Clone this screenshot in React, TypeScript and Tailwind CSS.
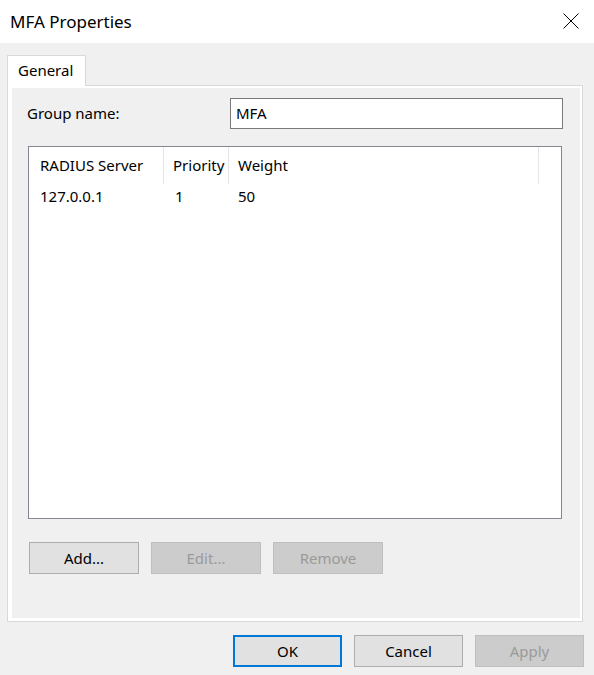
type Btn = { label: string; disabled?: boolean; primary?: boolean; wide?: boolean };

function DialogButton({ label, disabled, primary, wide }: Btn) {
  const base = `h-[32px] ${wide ? "w-[110px]" : "w-[109px]"} flex items-center justify-center text-[15px]`;
  if (disabled) {
    return (
      <div className={`${base} bg-[#cccccc] border border-[#bfbfbf] text-[#9a9a9a]`}>
        {label}
      </div>
    );
  }
  return (
    <div
      className={`${base} bg-[#e1e1e1] text-black ${
        primary ? "border-2 border-[#0078d7]" : "border border-[#adadad]"
      }`}
    >
      {label}
    </div>
  );
}

const servers = [{ host: "127.0.0.1", priority: "1", weight: "50" }];

export default function App() {
  return (
    <div
      className="w-[594px] h-[675px] bg-[#f0f0f0] flex flex-col text-black"
      style={{ fontFamily: '"Noto Sans", "Open Sans", sans-serif' }}
    >
      {/* title bar */}
      <div className="h-[43px] bg-white flex items-center justify-between pl-[10px] pr-[15px]">
        <span className="text-[17px]">MFA Properties</span>
        <svg width="16" height="16" viewBox="0 0 16 16" className="mt-[-1px]">
          <path d="M0.5 0.5 L15.5 15.5 M15.5 0.5 L0.5 15.5" stroke="#000" strokeWidth="1" />
        </svg>
      </div>

      {/* tab strip */}
      <div className="mt-[12px] ml-[7px] flex">
        <div className="h-[31px] w-[79px] bg-white border border-b-0 border-[#d9d9d9] pl-[10px] pt-[3px] text-[15px] relative z-10 -mb-px">
          General
        </div>
      </div>

      {/* tab page */}
      <div className="ml-[7px] mr-[11px] h-[537px] border border-[#d9d9d9] bg-white pl-[4px] pt-[2px] pr-[2px] pb-[3px]">
        <div className="h-full bg-[#f0f0f0] flex flex-col pl-[14px] pr-[17px]">
          <div className="mt-[10px] flex items-center justify-between">
            <span className="text-[15px] pl-[1px]">Group name:</span>
            <div className="w-[333px] h-[31px] bg-white border border-[#7a7a7a] flex items-center pl-[5px] text-[15px]">
              MFA
            </div>
          </div>

          {/* server list */}
          <div className="mt-[17px] ml-[2px] mr-[1px] h-[373px] bg-white border border-[#828790] text-[15px]">
            <div className="flex h-[37px] items-center">
              <div className="w-[135px] pl-[11px] h-full flex items-center border-r border-[#e5e5e5]">
                RADIUS Server
              </div>
              <div className="w-[65px] pl-[9px] h-full flex items-center border-r border-[#e5e5e5]">
                Priority
              </div>
              <div className="w-[310px] pl-[9px] h-full flex items-center border-r border-[#e5e5e5]">
                Weight
              </div>
            </div>
            {servers.map((s) => (
              <div key={s.host} className="flex h-[25px] items-center">
                <div className="w-[135px] pl-[11px]">{s.host}</div>
                <div className="w-[65px] pl-[11px]">{s.priority}</div>
                <div className="pl-[9px]">{s.weight}</div>
              </div>
            ))}
          </div>

          <div className="mt-[23px] ml-[3px] flex gap-[12px]">
            <DialogButton label="Add..." wide />
            <DialogButton label="Edit..." wide disabled />
            <DialogButton label="Remove" wide disabled />
          </div>
        </div>
      </div>

      {/* dialog buttons */}
      <div className="mt-[13px] flex justify-end gap-[12px] pr-[10px]">
        <DialogButton label="OK" primary />
        <DialogButton label="Cancel" />
        <DialogButton label="Apply" disabled />
      </div>
    </div>
  );
}
